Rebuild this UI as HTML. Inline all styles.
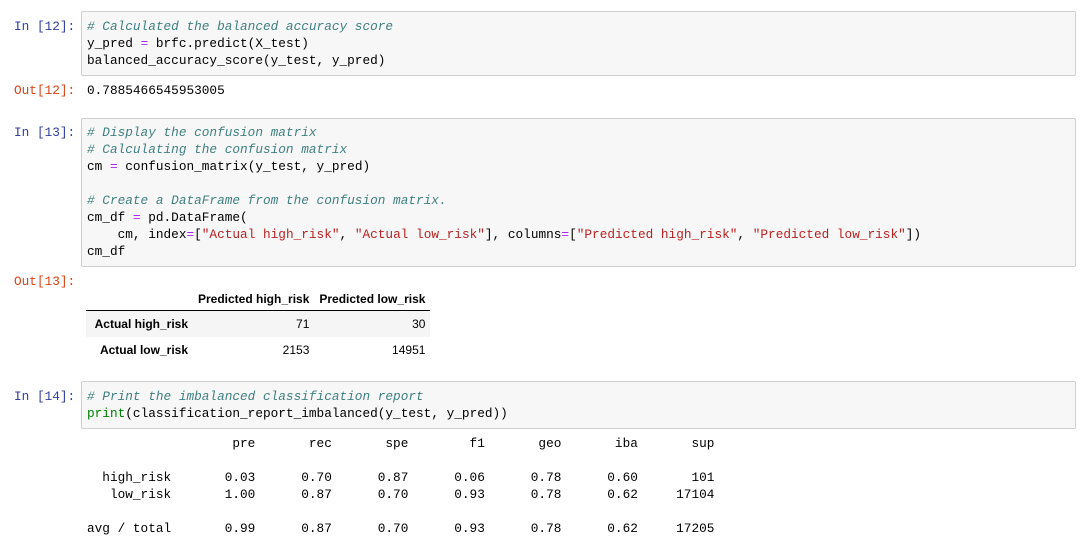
<!DOCTYPE html>
<html><head><meta charset="utf-8"><style>
body{margin:0;width:1087px;height:551px;background:#fff;position:relative;overflow:hidden;font-family:"Liberation Mono",monospace;font-size:12.75px;}
.p{position:absolute;margin:0;white-space:pre;line-height:17px;font-family:"Liberation Mono",monospace;font-size:12.75px;color:#000}
.in{color:#303F9F;}
.out{color:#D84315;}
.box{position:absolute;left:81px;width:993px;background:#f7f7f7;border:1px solid #cfcfcf;border-radius:2px;}
.c{color:#408080;font-style:italic}
.o{color:#AA22FF}
.s{color:#BA2121}
.g{color:#008000}
table{position:absolute;left:86px;top:288px;border-collapse:collapse;font-family:"Liberation Sans",sans-serif;font-size:12px;}
th,td{padding:0 5px;height:26px;text-align:right;}
thead th{font-weight:bold;border-bottom:1px solid #000;height:22px;}
tbody th{font-weight:bold}
tbody tr:nth-child(1){background:#f5f5f5}
</style></head><body>
<div class="box" style="top:11px;height:63px"></div>
<div class="p in" style="left:14px;top:18px">In [12]:</div>
<div class="p" style="left:87px;top:18px"><span class="c"># Calculated the balanced accuracy score</span>
y_pred <span class="o">=</span> brfc.predict(X_test)
balanced_accuracy_score(y_test, y_pred)</div>
<div class="p out" style="left:14px;top:82px">Out[12]:</div>
<div class="p" style="left:87px;top:82px">0.7885466545953005</div>

<div class="box" style="top:118px;height:147px"></div>
<div class="p in" style="left:14px;top:124px">In [13]:</div>
<div class="p" style="left:87px;top:124px"><span class="c"># Display the confusion matrix</span>
<span class="c"># Calculating the confusion matrix</span>
cm <span class="o">=</span> confusion_matrix(y_test, y_pred)

<span class="c"># Create a DataFrame from the confusion matrix.</span>
cm_df <span class="o">=</span> pd.DataFrame(
    cm, index<span class="o">=</span>[<span class="s">"Actual high_risk"</span>, <span class="s">"Actual low_risk"</span>], columns<span class="o">=</span>[<span class="s">"Predicted high_risk"</span>, <span class="s">"Predicted low_risk"</span>])
cm_df</div>
<div class="p out" style="left:14px;top:273px">Out[13]:</div>
<table>
<thead><tr><th style="width:97px"></th><th>Predicted high_risk</th><th>Predicted low_risk</th></tr></thead>
<tbody><tr><th>Actual high_risk</th><td>71</td><td>30</td></tr>
<tr><th>Actual low_risk</th><td>2153</td><td>14951</td></tr></tbody>
</table>

<div class="box" style="top:381px;height:46px"></div>
<div class="p in" style="left:14px;top:388px">In [14]:</div>
<div class="p" style="left:87px;top:388px"><span class="c"># Print the imbalanced classification report</span>
<span class="g">print</span>(classification_report_imbalanced(y_test, y_pred))</div>
<div class="p" style="left:87px;top:435px">                   pre       rec       spe        f1       geo       iba       sup

  high_risk       0.03      0.70      0.87      0.06      0.78      0.60       101
   low_risk       1.00      0.87      0.70      0.93      0.78      0.62     17104

avg / total       0.99      0.87      0.70      0.93      0.78      0.62     17205</div>
</body></html>
